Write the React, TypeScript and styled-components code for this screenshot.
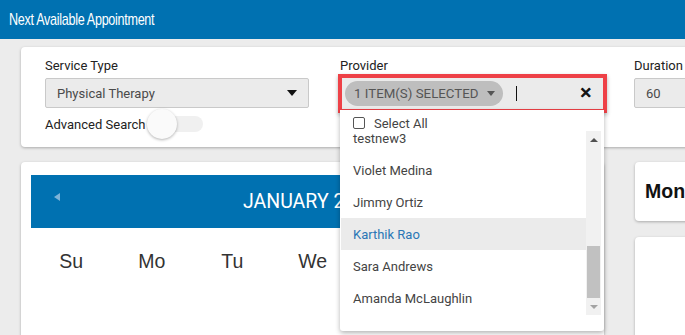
import React from "react";
import styled, { createGlobalStyle } from "styled-components";

const Global = createGlobalStyle`
  html, body { margin: 0; padding: 0; background: #ececec; overflow: hidden; }
  * { box-sizing: border-box; }
`;

const Page = styled.div`
  width: 685px;
  height: 335px;
  overflow: hidden;
  background: #ececec;
  font-family: Roboto, "Liberation Sans", sans-serif;
`;

const TitleBar = styled.div`
  height: 39px;
  background: #0071b1;
  display: flex;
  align-items: center;
  padding-left: 9px;
`;

const Title = styled.h1`
  margin: 0;
  color: #fff;
  font-family: "Liberation Sans", sans-serif;
  font-weight: 400;
  font-size: 17px;
  letter-spacing: -0.4px;
  white-space: nowrap;
  transform: scaleX(0.74);
  transform-origin: left center;
`;

const Content = styled.div`
  padding: 8px 0 0 21px;
  display: flex;
  flex-direction: column;
  gap: 15px;
`;

const Card = styled.div`
  background: #fff;
  border-radius: 4px;
  box-shadow: 0 1px 3px rgba(0, 0, 0, 0.28);
`;

const FormCard = styled(Card)`
  width: 700px;
  height: 100px;
  padding: 11px 0 0 24px;
  position: relative;
  z-index: 2;
`;

const FormRow = styled.div`
  display: flex;
  align-items: flex-start;
`;

const Field = styled.div<{ $w: number; $gap: number }>`
  width: ${(p) => p.$w}px;
  margin-right: ${(p) => p.$gap}px;
  flex: none;
  position: relative;
`;

const Label = styled.div<{ $indent?: number }>`
  font-size: 13px;
  line-height: 15px;
  color: #222;
  margin: 0 0 5px ${(p) => p.$indent || 0}px;
  white-space: nowrap;
`;

const SelectBox = styled.div`
  height: 30px;
  background: #ebebeb;
  border: 1px solid #c9c9c9;
  border-radius: 2px;
  display: flex;
  align-items: center;
  justify-content: space-between;
  padding: 0 11px 0 11px;
  font-size: 13px;
  color: #4a4a4a;
`;

const Caret = styled.span<{ $size?: number; $color?: string }>`
  width: 0;
  height: 0;
  border-left: ${(p) => (p.$size || 9) / 2}px solid transparent;
  border-right: ${(p) => (p.$size || 9) / 2}px solid transparent;
  border-top: ${(p) => (p.$size || 9) * 0.6}px solid ${(p) => p.$color || "#111"};
  display: inline-block;
`;

const ProviderBox = styled.div`
  margin-top: -4px;
  height: 39px;
  border: 4px solid #ee4147;
  background: #ebebeb;
  box-shadow: 0 2px 4px rgba(0, 0, 0, 0.3);
  display: flex;
  align-items: center;
  padding: 0 11px 0 3px;
`;

const Chip = styled.div`
  height: 25px;
  width: 158px;
  border-radius: 13px;
  background: #bebebe;
  color: #555;
  font-size: 13.3px;
  display: flex;
  align-items: center;
  gap: 8px;
  padding-left: 9px;
  white-space: nowrap;
`;

const Cursor = styled.span`
  width: 1px;
  height: 15px;
  background: #111;
  margin-left: 13px;
`;

const Clear = styled.span`
  margin-left: auto;
  font-size: 15px;
  font-weight: 900;
  color: #111;
  line-height: 1;
  font-family: "DejaVu Sans", sans-serif;
  -webkit-text-stroke: 0.9px #111;
`;

const ToggleRow = styled.div`
  display: flex;
  align-items: center;
  height: 32px;
`;

const ToggleText = styled.span`
  font-size: 13px;
  color: #222;
`;

const Track = styled.div`
  position: relative;
  width: 55px;
  height: 16px;
  border-radius: 8px;
  background: #f0f0f0;
  margin-left: 3px;
`;

const Knob = styled.div`
  position: absolute;
  left: -1px;
  top: -7px;
  width: 30px;
  height: 30px;
  border-radius: 50%;
  background: #fafafa;
  box-shadow: 0 1px 3px rgba(0, 0, 0, 0.3);
`;

const Dropdown = styled.div`
  position: absolute;
  left: 2px;
  top: 52px;
  width: 264px;
  height: 221px;
  background: #fff;
  box-shadow: 0 2px 5px rgba(0, 0, 0, 0.3);
  border-radius: 0 0 3px 3px;
  overflow: hidden;
  z-index: 5;
`;

const SelectAllRow = styled.label`
  display: flex;
  align-items: center;
  gap: 9px;
  height: 16px;
  margin: 5px 0 0 13px;
  font-size: 13px;
  color: #444;
`;

const Check = styled.span`
  width: 12px;
  height: 12px;
  border: 1px solid #555;
  border-radius: 2px;
  background: #fff;
`;

const ListArea = styled.div`
  display: flex;
  height: 184px;
`;

const List = styled.div`
  flex: 1;
  overflow: hidden;
`;

const ListInner = styled.div`
  margin-top: -9px;
`;

const Item = styled.div<{ $active?: boolean }>`
  height: 32px;
  display: flex;
  align-items: center;
  padding-left: 12px;
  font-size: 13px;
  color: ${(p) => (p.$active ? "#2a77b6" : "#444")};
  background: ${(p) => (p.$active ? "#ebebeb" : "transparent")};
  margin-left: 1px;
`;

const Scrollbar = styled.div`
  width: 15px;
  margin-right: 3px;
  background: #f1f1f1;
  display: flex;
  flex-direction: column;
  align-items: center;
`;

const ScrollBtn = styled.div`
  height: 17px;
  display: flex;
  align-items: center;
  justify-content: center;
`;

const UpCaret = styled.span`
  width: 0;
  height: 0;
  border-left: 4px solid transparent;
  border-right: 4px solid transparent;
  border-bottom: 4px solid #505050;
`;

const ScrollSpace = styled.div`
  flex: 1;
  width: 100%;
  display: flex;
  flex-direction: column;
  justify-content: flex-end;
  padding: 0 1px;
`;

const Thumb = styled.div`
  height: 52px;
  background: #c1c1c1;
`;

const BottomRow = styled.div`
  display: flex;
  gap: 31px;
  align-items: flex-start;
`;

const CalendarCard = styled(Card)`
  width: 583px;
  height: 200px;
  flex: none;
  padding: 13px 10px 0 10px;
`;

const CalHeader = styled.div`
  height: 53px;
  background: #0071b1;
  display: flex;
  align-items: center;
  padding-left: 23px;
`;

const PrevArrow = styled.span`
  width: 0;
  height: 0;
  border-top: 4px solid transparent;
  border-bottom: 4px solid transparent;
  border-right: 6px solid #7db3d8;
  margin-top: -9px;
`;

const MonthTitle = styled.div`
  margin-left: 183px;
  color: #fff;
  font-family: Roboto, "Liberation Sans", sans-serif;
  font-size: 19.5px;
  white-space: nowrap;
`;

const DaysRow = styled.div`
  display: grid;
  grid-template-columns: repeat(7, 80.5px);
  margin-top: 22px;
`;

const Day = styled.div`
  text-align: center;
  font-family: "Liberation Sans", sans-serif;
  font-size: 19.5px;
  color: #333;
  line-height: 22px;
`;

const SideColumn = styled.div`
  display: flex;
  flex-direction: column;
  gap: 16px;
  width: 200px;
  flex: none;
`;

const SideCard = styled(Card)<{ $h: number }>`
  height: ${(p) => p.$h}px;
  display: flex;
  align-items: center;
  padding-left: 10px;
`;

const SideTitle = styled.div`
  font-family: "Liberation Sans", sans-serif;
  font-weight: 700;
  font-size: 19.5px;
  color: #111;
  white-space: nowrap;
`;

const providers = [
  "testnew3",
  "Violet Medina",
  "Jimmy Ortiz",
  "Karthik Rao",
  "Sara Andrews",
  "Amanda McLaughlin",
];

export default function App() {
  return (
    <Page>
      <Global />
      <TitleBar>
        <Title>Next Available Appointment</Title>
      </TitleBar>
      <Content>
        <FormCard>
          <FormRow>
            <Field $w={264} $gap={29}>
              <Label>Service Type</Label>
              <SelectBox>
                <span>Physical Therapy</span>
                <Caret $size={10} />
              </SelectBox>
              <ToggleRow>
                <ToggleText>Advanced Search</ToggleText>
                <Track>
                  <Knob />
                </Track>
              </ToggleRow>
            </Field>
            <Field $w={269} $gap={27}>
              <Label $indent={2}>Provider</Label>
              <ProviderBox>
                <Chip>
                  <span>1 ITEM(S) SELECTED</span>
                  <Caret $size={9} $color="#555" />
                </Chip>
                <Cursor />
                <Clear>✕</Clear>
              </ProviderBox>
              <Dropdown>
                <SelectAllRow>
                  <Check />
                  <span>Select All</span>
                </SelectAllRow>
                <ListArea>
                  <List>
                    <ListInner>
                      {providers.map((p) => (
                        <Item key={p} $active={p === "Karthik Rao"}>
                          {p}
                        </Item>
                      ))}
                    </ListInner>
                  </List>
                  <Scrollbar>
                    <ScrollBtn>
                      <UpCaret />
                    </ScrollBtn>
                    <ScrollSpace>
                      <Thumb />
                    </ScrollSpace>
                    <ScrollBtn>
                      <Caret $size={8} $color="#a3a3a3" />
                    </ScrollBtn>
                  </Scrollbar>
                </ListArea>
              </Dropdown>
            </Field>
            <Field $w={120} $gap={0}>
              <Label>Duration</Label>
              <SelectBox>
                <span>60</span>
              </SelectBox>
            </Field>
          </FormRow>
        </FormCard>
        <BottomRow>
          <CalendarCard>
            <CalHeader>
              <PrevArrow />
              <MonthTitle>JANUARY 2021</MonthTitle>
            </CalHeader>
            <DaysRow>
              {["Su", "Mo", "Tu", "We", "Th", "Fr", "Sa"].map((d) => (
                <Day key={d}>{d}</Day>
              ))}
            </DaysRow>
          </CalendarCard>
          <SideColumn>
            <SideCard $h={59}>
              <SideTitle>Monday</SideTitle>
            </SideCard>
            <SideCard $h={120} />
          </SideColumn>
        </BottomRow>
      </Content>
    </Page>
  );
}
